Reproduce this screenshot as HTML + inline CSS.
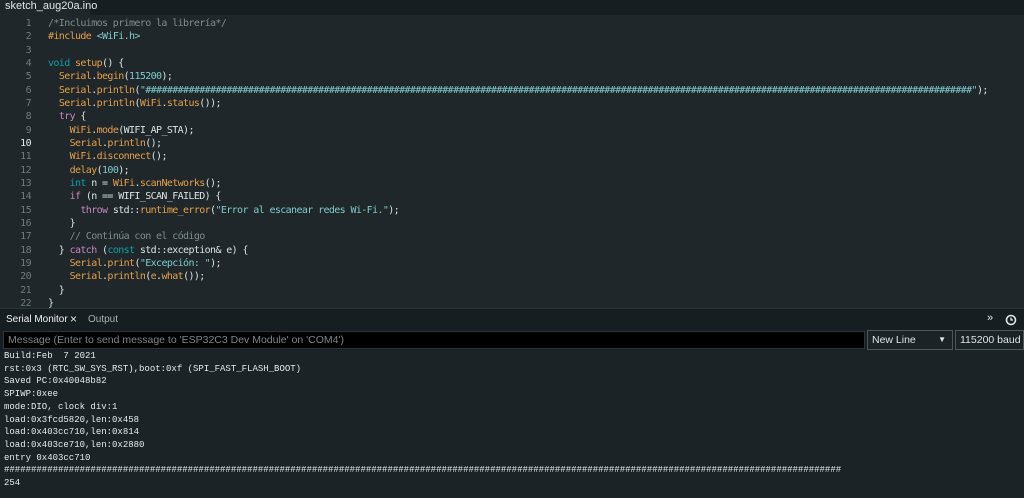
<!DOCTYPE html>
<html><head><meta charset="utf-8"><style>
*{margin:0;padding:0;box-sizing:border-box}
body{width:1024px;height:498px;overflow:hidden;background:#1c2326;font-family:"Liberation Sans",sans-serif;position:relative}
.tabbar{position:absolute;left:0;top:0;width:1024px;height:15px;background:#171e21}
.tab{position:absolute;left:0;top:0;height:15px;width:90px;background:#1f272a;color:#e0e6e8;font-size:11px;line-height:13px;padding-left:5px}
.editor{position:absolute;left:0;top:15px;width:1024px;height:293px;background:#1f272a}
.ln{position:absolute;left:0;width:31px;text-align:right;color:#6e7a7e;font:10px/13.33px "DejaVu Sans Mono",monospace;letter-spacing:-0.6px}
.code{position:absolute;left:48px;white-space:pre;color:#dae3e3;font:10px/13.33px "DejaVu Sans Mono",monospace;letter-spacing:-0.62px}
.c{color:#7f8c8d}.k{color:#0ca1a6}.o{color:#e5a04a}.s{color:#7fcbcd}.n{color:#7fcbcd}.p{color:#c586c0}
.panel{position:absolute;left:0;top:308px;width:1024px;height:22px;background:#171e21;border-top:1px solid #2a3336;color:#e0e6e8;font-size:10px}
.input{position:absolute;left:3px;top:331px;width:862px;height:18px;background:#000;border:1px solid #2c3538;color:#7d8588;font-size:10.5px;line-height:16px;padding-left:4px}
.sel{position:absolute;top:330px;height:20px;border:1px solid #4a5a5c;background:#1c2326;color:#dfe5e6;font-size:10.5px;line-height:18px;padding-left:4px}
.out{position:absolute;left:4px;top:350px;white-space:pre;color:#e6eaea;font:9px/12.7px "Liberation Mono",monospace}
</style></head><body>
<div class="tabbar"><div class="tab">sketch_aug20a.ino</div></div>
<div class="editor">
<div class="ln" style="top:2px">1<br>2<br>3<br>4<br>5<br>6<br>7<br>8<br>9<br><span style="color:#e6eaea">10</span><br>11<br>12<br>13<br>14<br>15<br>16<br>17<br>18<br>19<br>20<br>21<br>22</div>
<div class="code" style="top:2px"><span class="c">/*Incluimos primero la librería*/</span>
<span class="o">#include</span> <span class="s">&lt;WiFi.h&gt;</span>

<span class="k">void</span> <span class="o">setup</span>() {
  <span class="o">Serial</span>.<span class="o">begin</span>(<span class="n">115200</span>);
  <span class="o">Serial</span>.<span class="o">println</span>(<span class="s">"#########################################################################################################################################################"</span>);
  <span class="o">Serial</span>.<span class="o">println</span>(<span class="o">WiFi</span>.<span class="o">status</span>());
  <span class="p">try</span> {
    <span class="o">WiFi</span>.<span class="o">mode</span>(WIFI_AP_STA);
    <span class="o">Serial</span>.<span class="o">println</span>();
    <span class="o">WiFi</span>.<span class="o">disconnect</span>();
    <span class="o">delay</span>(<span class="n">100</span>);
    <span class="k">int</span> n = <span class="o">WiFi</span>.<span class="o">scanNetworks</span>();
    <span class="p">if</span> (n == WIFI_SCAN_FAILED) {
      <span class="p">throw</span> std::<span class="o">runtime_error</span>(<span class="s">"Error al escanear redes Wi-Fi."</span>);
    }
    <span class="c">// Continúa con el código</span>
  } <span class="p">catch</span> (<span class="k">const</span> std::exception&amp; e) {
    <span class="o">Serial</span>.<span class="o">print</span>(<span class="s">"Excepción: "</span>);
    <span class="o">Serial</span>.<span class="o">println</span>(<span class="o">e</span>.<span class="o">what</span>());
  }
}</div>
</div>
<div class="panel">
<span style="position:absolute;left:6px;top:5px;font-size:10px;color:#eef2f3">Serial Monitor</span>
<span style="position:absolute;left:70px;top:3px;font-size:12px">×</span>
<span style="position:absolute;left:88px;top:5px;color:#a8b0b3;font-size:10px">Output</span>
<span style="position:absolute;left:987px;top:3px;font-size:11px">»</span>
<svg style="position:absolute;left:1005px;top:5px" width="12" height="12" viewBox="0 0 12 12"><circle cx="6" cy="6" r="4.5" fill="none" stroke="#e0e6e8" stroke-width="1.6"/><path d="M6 3.5V6h2" stroke="#e0e6e8" stroke-width="1.3" fill="none"/></svg>
</div>
<div style="position:absolute;left:0;top:330px;width:1024px;height:20px;background:#171e21"></div>
<div class="input">Message (Enter to send message to 'ESP32C3 Dev Module' on 'COM4')</div>
<div class="sel" style="left:867px;width:86px">New Line<span style="position:absolute;right:6px;top:0;font-size:8px">▼</span></div>
<div class="sel" style="left:955px;width:69px">115200 baud</div>
<div class="out">Build:Feb  7 2021
rst:0x3 (RTC_SW_SYS_RST),boot:0xf (SPI_FAST_FLASH_BOOT)
Saved PC:0x40048b82
SPIWP:0xee
mode:DIO, clock div:1
load:0x3fcd5820,len:0x458
load:0x403cc710,len:0x814
load:0x403ce710,len:0x2880
entry 0x403cc710
###########################################################################################################################################################
254</div>
</body></html>
